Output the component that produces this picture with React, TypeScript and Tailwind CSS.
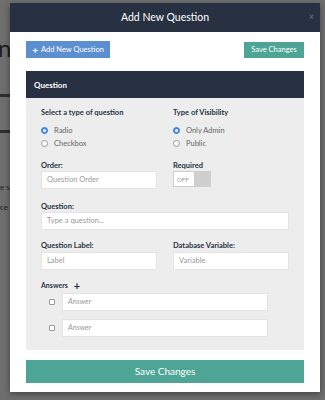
import React from 'react';

function Radio({ checked, label }: { checked?: boolean; label: string }) {
  return (
    <label className="flex items-center gap-[6px] h-[13px] text-[7.5px] text-[#666]">
      <span
        className={
          checked
            ? 'w-[7px] h-[7px] rounded-full bg-[#3b82f6] border border-[#3b82f6] flex items-center justify-center'
            : 'w-[7px] h-[7px] rounded-full bg-white border border-[#999]'
        }
      >
        {checked && <span className="w-[3px] h-[3px] rounded-full bg-white" />}
      </span>
      {label}
    </label>
  );
}

function Field({ placeholder, className }: { placeholder: string; className?: string }) {
  return (
    <div
      className={
        'h-[18px] bg-white border border-[#e4e4e4] flex items-center px-[5px] text-[7.5px] text-[#9a9a9a] ' +
        (className ?? '')
      }
    >
      {placeholder}
    </div>
  );
}

export default function App() {
  return (
    <div
      className="relative w-[325px] h-[400px] overflow-hidden bg-[#6e6e6e]"
      style={{ fontFamily: 'Lato, "Noto Sans", sans-serif' }}
    >
      {/* page behind the overlay */}
      <div className="absolute left-[-2px] top-[36px] text-[24px] text-[#1e1e1e] leading-none">n</div>
      <div className="absolute left-0 top-[94px] w-[10px] h-[3px] bg-[#2e2e2e]" />
      <div className="absolute left-0 top-[130px] w-[10px] h-[3px] bg-[#2e2e2e]" />
      <div className="absolute left-0 top-[181px] text-[8px] text-[#1e1e1e]">e sp</div>
      <div className="absolute left-0 top-[201px] text-[8px] text-[#1e1e1e]">ce</div>

      {/* modal */}
      <div className="absolute left-[10px] top-[3px] w-[310px] h-[389px] bg-white shadow-[0_2px_6px_rgba(0,0,0,0.4)] flex flex-col">
        <div className="h-[29px] bg-[#273142] flex items-center justify-center relative">
          <span className="text-white text-[10.5px]">Add New Question</span>
          <span className="absolute right-[6px] top-[9px] text-[#6b7480] text-[9px] leading-none">×</span>
        </div>

        <div className="px-[16px] pt-[9px] flex flex-col">
          <div className="flex justify-between items-center">
            <button className="h-[17px] w-[84px] bg-[#5b8fd0] text-white text-[7.5px] flex items-center justify-center gap-[3px]">
              <span className="text-[10px] font-bold leading-none">+</span>Add New Question
            </button>
            <button className="h-[16px] w-[60px] bg-[#4ea596] text-white text-[7.5px] flex items-center justify-center">
              Save Changes
            </button>
          </div>

          <div className="mt-[13px] flex flex-col">
            <div className="h-[27px] bg-[#273142] flex items-center px-[8px] text-white text-[8px] font-bold">
              Question
            </div>
            <div className="bg-[#ededed] px-[15px] pt-[9px] pb-[13px] text-[#273142] flex flex-col">
              <div className="grid grid-cols-2 gap-x-[16px]">
                <div className="flex flex-col">
                  <span className="text-[7.5px] font-bold h-[12px]">Select a type of question</span>
                  <div className="mt-[5px] flex flex-col">
                    <Radio checked label="Radio" />
                    <Radio label="Checkbox" />
                  </div>
                </div>
                <div className="flex flex-col">
                  <span className="text-[7.5px] font-bold h-[12px]">Type of Visibility</span>
                  <div className="mt-[5px] flex flex-col">
                    <Radio checked label="Only Admin" />
                    <Radio label="Public" />
                  </div>
                </div>
              </div>

              <div className="grid grid-cols-2 gap-x-[16px] mt-[10px]">
                <div className="flex flex-col">
                  <span className="text-[7.5px] font-bold h-[10px]">Order:</span>
                  <Field placeholder="Question Order" className="mt-[1px]" />
                </div>
                <div className="flex flex-col">
                  <span className="text-[7.5px] font-bold h-[10px]">Required</span>
                  <div className="mt-[1px] w-[38px] h-[16px] bg-[#cfcfcf] border border-[#cfcfcf] flex">
                    <span className="w-[20px] h-full bg-white text-[6px] text-[#999] flex items-center pl-[3px]">
                      OFF
                    </span>
                  </div>
                </div>
              </div>

              <span className="text-[7.5px] font-bold mt-[12px] h-[10px]">Question:</span>
              <Field placeholder="Type a question..." className="mt-[1px]" />

              <div className="grid grid-cols-2 gap-x-[16px] mt-[10px]">
                <div className="flex flex-col">
                  <span className="text-[7.5px] font-bold h-[10px]">Question Label:</span>
                  <Field placeholder="Label" className="mt-[2px]" />
                </div>
                <div className="flex flex-col">
                  <span className="text-[7.5px] font-bold h-[10px]">Database Variable:</span>
                  <Field placeholder="Variable" className="mt-[2px]" />
                </div>
              </div>

              <div className="mt-[10px] flex items-center gap-[6px] h-[10px]">
                <span className="text-[7px] font-bold">Answers</span>
                <span className="text-[11px] font-bold leading-none">+</span>
              </div>
              <div className="flex flex-col gap-[8px] mt-[3px] pl-[8px] pr-[21px]">
                {[0, 1].map((i) => (
                  <div key={i} className="flex items-center gap-[7px]">
                    <span className="w-[6px] h-[6px] bg-white border border-[#999] rounded-[1px]" />
                    <Field placeholder="Answer" className="flex-1 italic" />
                  </div>
                ))}
              </div>
            </div>
          </div>

          <button className="mt-[10px] h-[23px] w-full bg-[#4ea596] text-white text-[10px] flex items-center justify-center">
            Save Changes
          </button>
        </div>
      </div>
    </div>
  );
}
